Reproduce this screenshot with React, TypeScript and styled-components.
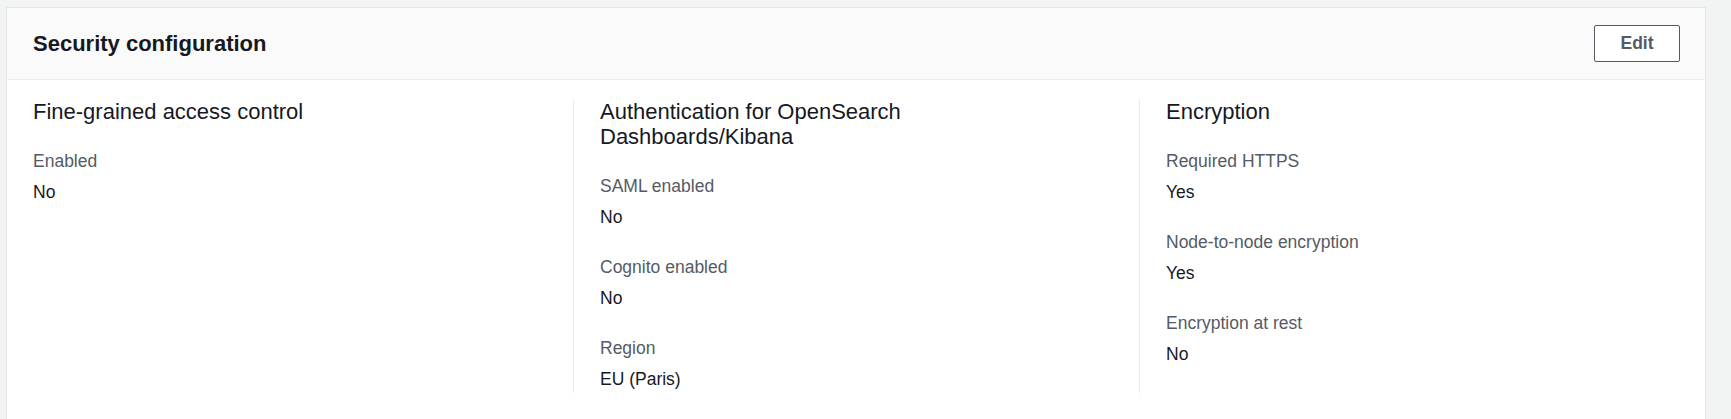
import React from "react";
import styled, { createGlobalStyle } from "styled-components";

const GlobalStyle = createGlobalStyle`
  html, body {
    margin: 0;
    padding: 0;
    background: #f2f3f3;
    font-family: "Liberation Sans", Arial, sans-serif;
    color: #16191f;
  }
  * { box-sizing: border-box; }
`;

const Page = styled.div`
  padding: 7px 25px 0 6px;
`;

const Card = styled.section`
  background: #ffffff;
  border: 1px solid #e3e5e5;
  border-bottom: none;
`;

const Header = styled.header`
  height: 72px;
  display: flex;
  align-items: center;
  justify-content: space-between;
  padding: 0 25px 0 26px;
  background: #fafafa;
  border-bottom: 1px solid #eaeded;
`;

const Title = styled.h2`
  margin: 0;
  font-size: 22px;
  line-height: 28px;
  font-weight: 700;
  color: #16191f;
`;

const Button = styled.button`
  width: 86px;
  height: 37px;
  margin-top: -1px;
  border: 1px solid #545b64;
  border-radius: 2px;
  background: #ffffff;
  color: #545b64;
  font-family: inherit;
  font-size: 17.5px;
  font-weight: 700;
  cursor: pointer;
`;

const Body = styled.div`
  display: grid;
  grid-template-columns: repeat(3, 1fr);
  padding: 19px 0 30px;
`;

const Column = styled.div<{ $divider?: boolean }>`
  padding-left: 26px;
  padding-right: 20px;
  border-left: ${(p) => (p.$divider ? "1px solid #eaeded" : "none")};
`;

const Heading = styled.h3`
  margin: 0 0 23px;
  font-size: 22px;
  line-height: 25px;
  font-weight: 400;
  color: #16191f;
  max-width: 320px;
`;

const Pair = styled.div`
  & + & {
    margin-top: 22px;
  }
`;

const Label = styled.div`
  font-size: 17.5px;
  line-height: 28px;
  color: #545b64;
  margin-bottom: 3px;
`;

const Value = styled.div`
  font-size: 17.5px;
  line-height: 28px;
  color: #16191f;
`;

type Section = { title: string; items: [string, string][] };

const sections: Section[] = [
  { title: "Fine-grained access control", items: [["Enabled", "No"]] },
  {
    title: "Authentication for OpenSearch Dashboards/Kibana",
    items: [
      ["SAML enabled", "No"],
      ["Cognito enabled", "No"],
      ["Region", "EU (Paris)"],
    ],
  },
  {
    title: "Encryption",
    items: [
      ["Required HTTPS", "Yes"],
      ["Node-to-node encryption", "Yes"],
      ["Encryption at rest", "No"],
    ],
  },
];

export default function App() {
  return (
    <>
      <GlobalStyle />
      <Page>
        <Card>
          <Header>
            <Title>Security configuration</Title>
            <Button>Edit</Button>
          </Header>
          <Body>
            {sections.map((s, i) => (
              <Column key={s.title} $divider={i > 0}>
                <Heading>{s.title}</Heading>
                {s.items.map(([k, v]) => (
                  <Pair key={k}>
                    <Label>{k}</Label>
                    <Value>{v}</Value>
                  </Pair>
                ))}
              </Column>
            ))}
          </Body>
        </Card>
      </Page>
    </>
  );
}
